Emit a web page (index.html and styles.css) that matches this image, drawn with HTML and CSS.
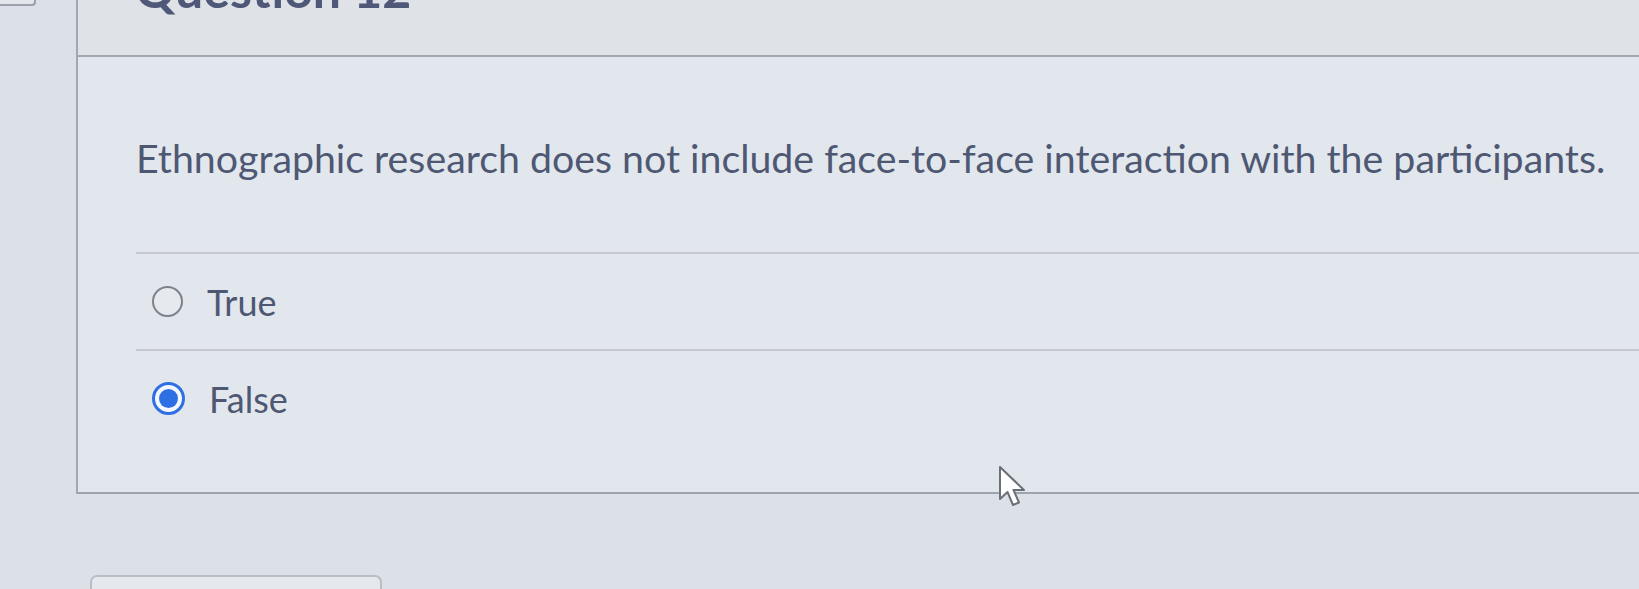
FILE: index.html
```html
<!DOCTYPE html>
<html lang="en">
<head>
<meta charset="utf-8">
<title>Question 12</title>
<link rel="stylesheet" href="styles.css">
</head>
<body>
<div class="layout">
  <div class="left-col">
    <div class="nav-box"></div>
  </div>
  <div class="main">
    <section class="card">
      <header class="card-header">
        <h2 class="card-title">Question 12</h2>
      </header>
      <div class="card-body">
        <p class="question-text">Ethnographic research does not include face-to-face interaction with the participants.</p>
        <ul class="answers">
          <li class="answer">
            <span class="radio"></span>
            <span class="answer-label">True</span>
          </li>
          <li class="answer">
            <span class="radio radio-checked"><span class="radio-dot"></span></span>
            <span class="answer-label">False</span>
          </li>
        </ul>
      </div>
      <svg class="cursor" width="32" height="44" viewBox="0 0 32 44" aria-hidden="true">
        <path d="M2 2 L2 34 L9.5 27 L15 40 L21 37.5 L15.5 25 L26 25 Z" fill="#ffffff" stroke="#6b6f78" stroke-width="2" stroke-linejoin="round"/>
      </svg>
    </section>
    <div class="bottom-row">
      <div class="btn-ghost"></div>
    </div>
  </div>
</div>
</body>
</html>
```
FILE: styles.css
```css
html, body {
  margin: 0;
  padding: 0;
}
body {
  background: #dbe1e7;
  font-family: Lato, "Open Sans", sans-serif;
  color: #4e5873;
  width: 1639px;
  height: 589px;
  overflow: hidden;
}
.layout {
  display: flex;
  align-items: flex-start;
}
.left-col {
  width: 76px;
  flex: none;
}
.nav-box {
  width: 34px;
  height: 4px;
  border: 2px solid #9ba2ad;
  border-top: none;
  border-left: none;
  border-radius: 0 0 4px 0;
  background: #e3e7ec;
}
.main {
  flex: 1;
  min-width: 0;
}
.card {
  position: relative;
  border-left: 2px solid #a2a7b0;
  border-bottom: 2px solid #9ea3ac;
  background: #e2e7ed;
  height: 494px;
  box-sizing: border-box;
}
.card-header {
  height: 57px;
  box-sizing: border-box;
  background: #dfe2e7;
  border-bottom: 2px solid #a3a7af;
  overflow: hidden;
  padding-left: 57px;
}
.card-title {
  margin: -36px 0 0 0;
  font-size: 50px;
  font-weight: 700;
  line-height: 50px;
  color: #4f5878;
  white-space: nowrap;
}
.card-body {
  padding: 76px 0 0 58px;
}
.question-text {
  margin: 0;
  font-size: 39.3px;
  line-height: 50px;
  font-weight: 400;
  color: #4e5873;
  white-space: nowrap;
}
.answers {
  list-style: none;
  margin: 69px 0 0 0;
  padding: 0;
}
.answer {
  display: flex;
  align-items: center;
  gap: 24px;
  height: 97px;
  border-top: 2px solid #c4c8ce;
  box-sizing: border-box;
  padding-left: 16px;
}
.radio {
  width: 31px;
  height: 31px;
  border: 2px solid #7d828b;
  border-radius: 50%;
  box-sizing: border-box;
  background: #e6eaef;
  flex: none;
  display: flex;
  align-items: center;
  justify-content: center;
}
.radio-checked {
  width: 33px;
  height: 33px;
  border: 3px solid #2f6fe4;
  background: #f4f7fb;
}
.radio-dot {
  width: 19px;
  height: 19px;
  border-radius: 50%;
  background: #2f6fe4;
}
.answer-label {
  font-size: 36px;
  line-height: 40px;
  color: #4e5873;
}
.cursor {
  position: absolute;
  left: 920px;
  top: 465px;
}
.bottom-row {
  padding: 81px 0 0 14px;
}
.btn-ghost {
  width: 288px;
  height: 30px;
  border: 2px solid #b9bec6;
  border-bottom: none;
  border-radius: 7px 7px 0 0;
  background: #e5e9ee;
}
```
